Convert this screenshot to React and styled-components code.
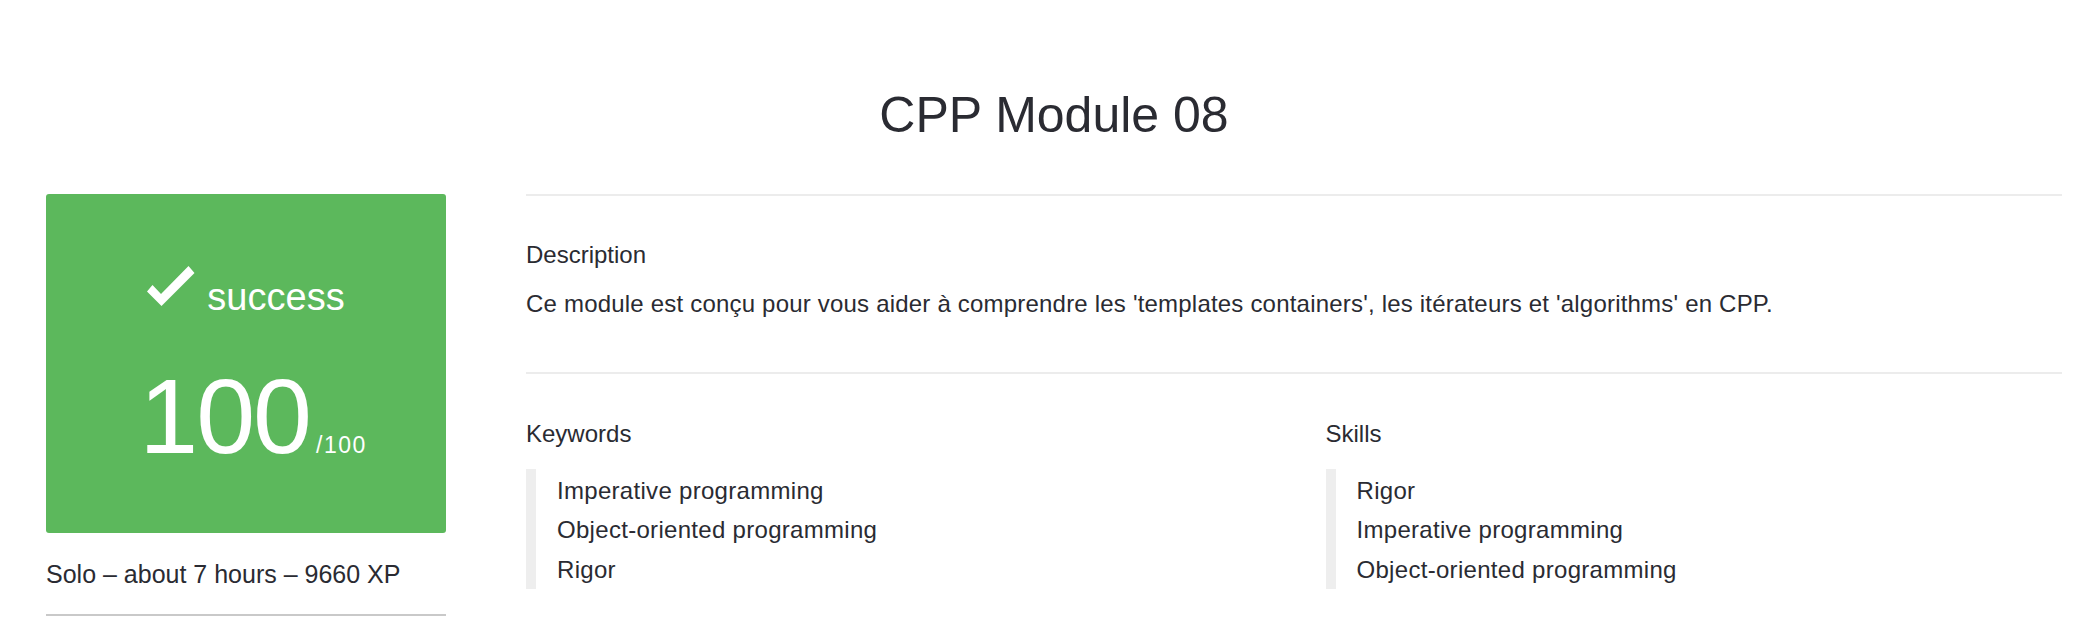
import React from "react";
import styled, { createGlobalStyle } from "styled-components";

const GlobalStyle = createGlobalStyle`
  html, body {
    margin: 0;
    padding: 0;
    background: #ffffff;
  }
  body {
    font-family: "Liberation Sans", Arial, sans-serif;
    color: #2a2b32;
  }
`;

const Page = styled.div`
  padding: 85px 26px 0 46px;
`;

const Title = styled.h1`
  margin: 0 0 49px;
  text-align: center;
  font-size: 50px;
  line-height: 60px;
  font-weight: 400;
  color: #2a2b32;
`;

const Layout = styled.div`
  display: grid;
  grid-template-columns: 400px 1fr;
  column-gap: 80px;
  align-items: start;
`;

const Sidebar = styled.aside`
  display: flex;
  flex-direction: column;
`;

const ScoreCard = styled.div`
  box-sizing: border-box;
  height: 339px;
  padding-top: 79px;
  background: #5cb85c;
  border-radius: 3px;
  color: #ffffff;
  display: flex;
  flex-direction: column;
  align-items: center;
`;

const StatusRow = styled.div`
  display: flex;
  align-items: flex-start;
  gap: 12px;
  height: 48px;
`;

const CheckIcon = styled.svg`
  width: 48px;
  height: 40px;
  margin-top: -7px;
  flex: none;
`;

const StatusText = styled.span`
  font-size: 38px;
  line-height: 48px;
`;

const ScoreRow = styled.div`
  display: flex;
  align-items: baseline;
  margin-top: 42px;
  padding-left: 14px;
`;

const ScoreValue = styled.span`
  font-size: 106px;
  line-height: 106px;
  letter-spacing: -2px;
`;

const ScoreMax = styled.span`
  font-size: 23px;
  line-height: 23px;
  letter-spacing: 1.5px;
  margin-left: 6px;
`;

const Meta = styled.p`
  margin: 25px 0 0;
  font-size: 25px;
  line-height: 32px;
`;

const SideDivider = styled.div`
  margin-top: 24px;
  height: 2px;
  background: #c9c9c9;
`;

const Content = styled.main`
  display: flex;
  flex-direction: column;
`;

const Rule = styled.hr`
  margin: 0;
  border: 0;
  height: 2px;
  background: #ececec;
`;

const Section = styled.section`
  padding: ${(p) => p.$pad};
`;

const Label = styled.h4`
  margin: 0;
  font-size: 24px;
  line-height: 32px;
  font-weight: 400;
`;

const Text = styled.p`
  margin: 17px 0 0;
  font-size: 24px;
  line-height: 32px;
  letter-spacing: 0.2px;
`;

const Columns = styled.div`
  display: grid;
  grid-template-columns: 1fr 1fr;
  column-gap: 63px;
  padding-top: 43.5px;
`;

const TagList = styled.ul`
  margin: 19.5px 0 0;
  padding: 1.5px 0 0 21px;
  border-left: 10px solid #eeeeee;
  list-style: none;
`;

const TagItem = styled.li`
  font-size: 24px;
  line-height: 39.5px;
  letter-spacing: 0.3px;
`;

const keywords = ["Imperative programming", "Object-oriented programming", "Rigor"];
const skills = ["Rigor", "Imperative programming", "Object-oriented programming"];

export default function App() {
  return (
    <>
      <GlobalStyle />
      <Page>
        <Title>CPP Module 08</Title>
        <Layout>
          <Sidebar>
            <ScoreCard>
              <StatusRow>
                <CheckIcon viewBox="0 0 48 40" aria-hidden="true">
                  <polygon
                    points="0,25.5 14.5,40 47.5,7 41.5,0 14,28 5.5,19"
                    fill="#ffffff"
                  />
                </CheckIcon>
                <StatusText>success</StatusText>
              </StatusRow>
              <ScoreRow>
                <ScoreValue>100</ScoreValue>
                <ScoreMax>/100</ScoreMax>
              </ScoreRow>
            </ScoreCard>
            <Meta>Solo – about 7 hours – 9660 XP</Meta>
            <SideDivider />
          </Sidebar>
          <Content>
            <Rule />
            <Section $pad="43px 0 52px">
              <Label>Description</Label>
              <Text>
                Ce module est conçu pour vous aider à comprendre les 'templates containers', les
                itérateurs et 'algorithms' en CPP.
              </Text>
            </Section>
            <Rule />
            <Columns>
              <div>
                <Label>Keywords</Label>
                <TagList>
                  {keywords.map((k) => (
                    <TagItem key={k}>{k}</TagItem>
                  ))}
                </TagList>
              </div>
              <div>
                <Label>Skills</Label>
                <TagList>
                  {skills.map((k) => (
                    <TagItem key={k}>{k}</TagItem>
                  ))}
                </TagList>
              </div>
            </Columns>
          </Content>
        </Layout>
      </Page>
    </>
  );
}
